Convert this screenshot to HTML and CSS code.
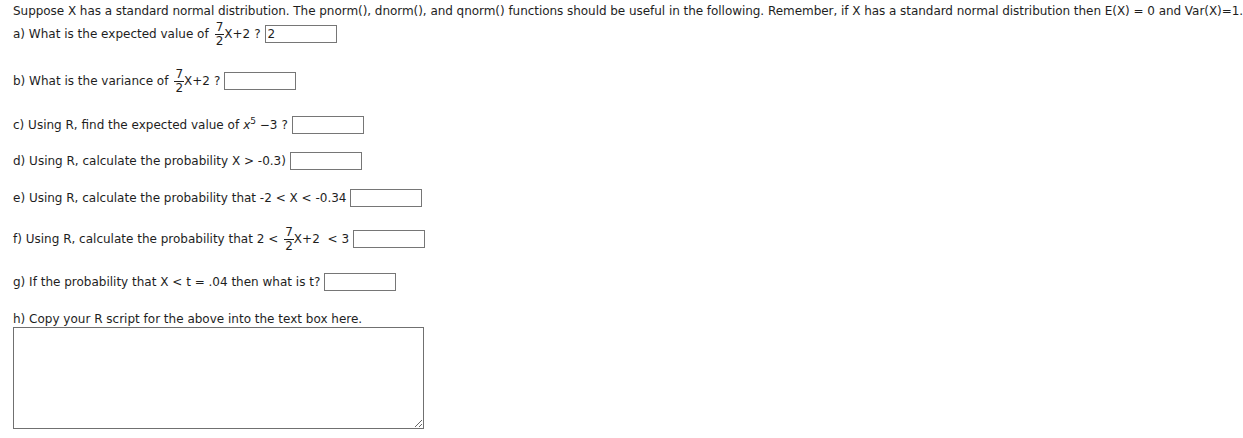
FILE: index.html
```html
<!DOCTYPE html>
<html>
<head>
<meta charset="utf-8">
<link rel="stylesheet" href="styles.css">
</head>
<body>
<div class="page">
  <p class="intro">Suppose X has a standard normal distribution. The pnorm(), dnorm(), and qnorm() functions should be useful in the following. Remember, if X has a standard normal distribution then E(X) = 0 and Var(X)=1.</p>

  <div class="q q-a">
    <span>a) What is the expected value of</span>
    <span class="math"><span class="frac"><span class="num">7</span><span class="den">2</span></span><span>X+2</span></span>
    <span>?</span>
    <input class="ans" type="text" value="2">
  </div>

  <div class="q q-b">
    <span>b) What is the variance of</span>
    <span class="math"><span class="frac"><span class="num">7</span><span class="den">2</span></span><span>X+2</span></span>
    <span>?</span>
    <input class="ans" type="text">
  </div>

  <div class="q q-c">
    <span>c) Using R, find the expected value of</span>
    <span class="power"><i class="var">x</i><sup>5</sup> &minus;3</span>
    <span>?</span>
    <input class="ans" type="text">
  </div>

  <div class="q q-d">
    <span>d) Using R, calculate the probability X &gt; -0.3)</span>
    <input class="ans" type="text">
  </div>

  <div class="q q-e">
    <span>e) Using R, calculate the probability that -2 &lt; X &lt; -0.34</span>
    <input class="ans" type="text">
  </div>

  <div class="q q-f">
    <span>f) Using R, calculate the probability that 2 &lt;</span>
    <span class="math"><span class="frac"><span class="num">7</span><span class="den">2</span></span><span>X+2</span></span>
    <span>&nbsp;&lt; 3</span>
    <input class="ans" type="text">
  </div>

  <div class="q q-g">
    <span>g) If the probability that X &lt; t = .04 then what is t?</span>
    <input class="ans" type="text">
  </div>

  <div class="q-h">h) Copy your R script for the above into the text box here.</div>
  <textarea class="script"></textarea>
</div>
</body>
</html>
```

FILE: styles.css
```css
html, body {
  margin: 0;
  padding: 0;
  background: #ffffff;
}

.page {
  padding: 4px 0 0 13px;
  font-family: "DejaVu Sans", Verdana, sans-serif;
  font-size: 12px;
  color: #1e1e1e;
}

.intro {
  margin: 0;
  line-height: 15px;
  white-space: nowrap;
  letter-spacing: -0.045px;
}

.q {
  display: flex;
  align-items: center;
  gap: 4px;
  white-space: nowrap;
}

.q-a { margin-top: 1px; height: 28px; }
.q-b { margin-top: 19px; height: 28px; }
.q-c { margin-top: 20px; height: 20px; }
.q-d { margin-top: 16px; height: 20px; }
.q-e { margin-top: 17px; height: 20px; }
.q-f { margin-top: 17px; height: 28px; }
.q-g { margin-top: 19px; height: 20px; }

.math {
  display: inline-flex;
  align-items: center;
  margin-left: 2px;
}

.frac {
  display: inline-flex;
  flex-direction: column;
  align-items: center;
  margin-top: 1px;
  font-size: 12px;
  line-height: 11px;
}

.frac .num {
  border-bottom: 1px solid #1e1e1e;
  padding: 0 1px 1px;
}

.frac .den {
  padding-top: 1px;
}

.power {
  margin-left: 0;
}

.var {
  font-style: italic;
}

sup {
  font-size: 9px;
  vertical-align: 5px;
  line-height: 0;
  margin-right: 0;
}

.ans {
  width: 72px;
  height: 18px;
  box-sizing: border-box;
  margin: 0;
  padding: 0 2px;
  border: 1px solid #767676;
  font-family: "DejaVu Sans", Verdana, sans-serif;
  font-size: 12px;
  color: #1e1e1e;
  background: #ffffff;
}

.q-h {
  margin-top: 21px;
  line-height: 13px;
}

.script {
  display: block;
  margin-top: 1px;
  width: 411px;
  height: 102px;
  box-sizing: border-box;
  border: 1px solid #707070;
  padding: 2px;
  font-family: "DejaVu Sans", Verdana, sans-serif;
  font-size: 12px;
}
```
